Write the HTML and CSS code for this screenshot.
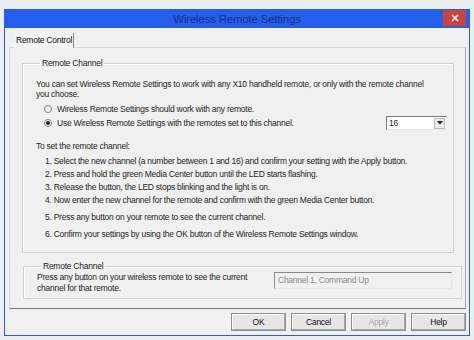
FILE: index.html
```html
<!DOCTYPE html>
<html>
<head>
<meta charset="utf-8">
<link rel="stylesheet" href="styles.css">
</head>
<body>
<div class="window">
  <div class="titlebar">
    <span class="title">Wireless Remote Settings</span>
    <span class="close"><svg width="8" height="8" viewBox="0 0 8 8"><path d="M1 1L7 7M7 1L1 7" stroke="#fff" stroke-width="1.6"/></svg></span>
  </div>
  <div class="client">
    <div class="tabs"><div class="tab">Remote Control</div></div>
    <div class="page">
      <fieldset class="group g1">
        <legend>Remote Channel</legend>
        <p class="intro">You can set Wireless Remote Settings to work with any X10 handheld remote, or only with the remote channel you choose.</p>
        <div class="radio"><span class="rb"></span><span>Wireless Remote Settings should work with any remote.</span></div>
        <div class="radio row2"><span class="rb on"></span><span class="grow">Use Wireless Remote Settings with the remotes set to this channel.</span>
          <span class="combo"><span class="val">16</span><span class="arrow"><svg width="6" height="4" viewBox="0 0 6 4"><path d="M0 0H6L3 3.5Z" fill="#222"/></svg></span></span>
        </div>
        <p class="steps-head">To set the remote channel:</p>
        <ol class="steps">
          <li class="first">1. Select the new channel (a number between 1 and 16) and confirm your setting with the Apply button.</li>
          <li>2. Press and hold the green Media Center button until the LED starts flashing.</li>
          <li>3. Release the button, the LED stops blinking and the light is on.</li>
          <li>4. Now enter the new channel for the remote and confirm with the green Media Center button.</li>
          <li class="gap">5. Press any button on your remote to see the current channel.</li>
          <li class="gap">6. Confirm your settings by using the OK button of the Wireless Remote Settings window.</li>
        </ol>
      </fieldset>
      <fieldset class="group g2">
        <legend>Remote Channel</legend>
        <div class="g2row">
          <p class="g2text">Press any button on your wireless remote to see the current<br>channel for that remote.</p>
          <div class="field">Channel 1, Command Up</div>
        </div>
      </fieldset>
    </div>
    <div class="buttons">
      <button class="btn">OK</button>
      <button class="btn">Cancel</button>
      <button class="btn disabled">Apply</button>
      <button class="btn">Help</button>
    </div>
  </div>
</div>
</body>
</html>
```
FILE: styles.css
```css
* { box-sizing: border-box; }
html, body { margin: 0; padding: 0; }
body {
  background: #eceef0;
  width: 474px;
  height: 340px;
  overflow: hidden;
  font-family: "Liberation Sans", Arial, sans-serif;
  font-size: 8.5px;
  letter-spacing: -0.25px;
  color: #262626;
}
.window {
  margin: 9px 4px 0 4px;
  width: 466px;
  height: 327px;
  border: 1px solid #2a5ee8;
  border-top: 0;
  background: #f0f0f0;
  display: flex;
  flex-direction: column;
}
.titlebar {
  height: 19px;
  background: #245fec;
  display: flex;
  align-items: center;
  justify-content: center;
  position: relative;
  margin: 0 -1px;
}
.title {
  font-size: 11.5px;
  color: #1a2f86;
  letter-spacing: -0.2px;
}
.close {
  position: absolute;
  right: 4px;
  top: 1px;
  width: 23px;
  height: 16px;
  background: #c9453d;
  display: flex;
  align-items: center;
  justify-content: center;
}
.client {
  flex: 1;
  display: flex;
  flex-direction: column;
  padding: 5px 3px 0 4px;
}
.tabs {
  display: flex;
  padding-left: 5px;
  height: 14px;
}
.tab {
  height: 15px;
  padding: 2px 1px 0 2px;
  border-right: 1px solid #8a8a8a;
  background: #f4f4f4;
  color: #111;
  position: relative;
  z-index: 1;
}
.page {
  height: 262px;
  border: 1px solid #d8d8d8;
  border-right: 1px solid #a8a8a8;
  border-bottom: 1px solid #7a7a7a;
  padding: 10px 11px 0 12px;
  display: flex;
  flex-direction: column;
}
.group {
  margin: 0;
  border: 1px solid #d0d0d0;
  box-shadow: inset 1px 1px 0 #fff;
  padding: 0 0 0 13px;
  min-width: 0;
}
legend {
  padding: 0 2px;
  margin-left: 4px;
  color: #222;
  line-height: 10px;
}
.g1 {
  height: 195px;
  flex: none;
}
.intro {
  margin: 11px 0 0 0;
  width: 392px;
  line-height: 10px;
}
.radio {
  display: flex;
  align-items: center;
  margin-top: 4px;
  padding-left: 8px;
  height: 12px;
}
.row2 { margin-top: 2px; }
.rb {
  width: 8px;
  height: 8px;
  border-radius: 50%;
  border: 1px solid #7a7a7a;
  background: #fff;
  margin-right: 5px;
  flex: none;
  display: flex;
  align-items: center;
  justify-content: center;
}
.rb.on::after {
  content: "";
  width: 4px;
  height: 4px;
  border-radius: 50%;
  background: #222;
}
.grow { flex: 1; }
.combo {
  width: 61px;
  height: 14px;
  flex: none;
  border-top: 1px solid #7a7a7a;
  border-left: 1px solid #7a7a7a;
  border-right: 1px solid #e8e8e8;
  border-bottom: 1px solid #e8e8e8;
  background: #fff;
  display: flex;
  align-items: center;
  margin-right: 6px;
}
.val { flex: 1; padding-left: 2px; }
.arrow {
  width: 11px;
  height: 11px;
  margin-right: 1px;
  background: #ececec;
  border: 1px solid #bcbcbc;
  display: flex;
  align-items: center;
  justify-content: center;
}
.steps-head {
  margin: 12px 0 0 0;
  line-height: 11px;
}
.steps {
  list-style: none;
  margin: 0;
  padding: 0 0 0 9px;
}
.steps li {
  line-height: 11px;
  margin-top: 2px;
}
.steps li.first { margin-top: 4px; }
.steps li.gap { margin-top: 6px; }
.g2 {
  margin-top: 8px;
  height: 38px;
  margin-left: 1px;
  margin-right: -8px;
}
.g2row {
  display: flex;
  align-items: flex-start;
}
.g2text {
  margin: 1px 0 0 0;
  width: 237px;
  line-height: 11px;
  flex: none;
  white-space: nowrap;
}
.field {
  margin-top: 1px;
  width: 178px;
  height: 17px;
  border-top: 1px solid #8a8a8a;
  border-left: 1px solid #8a8a8a;
  border-right: 1px solid #e6e6e6;
  border-bottom: 1px solid #e6e6e6;
  background: #f0f0f0;
  color: #8a8a8a;
  padding: 2px 0 0 3px;
}
.buttons {
  display: flex;
  justify-content: flex-end;
  gap: 5px;
  padding: 4px 0 0 0;
}
.btn {
  width: 55px;
  height: 18px;
  border: 1px solid #8f8f8f;
  background: #e6e6e6;
  box-shadow: inset -1px -1px 0 #a8a8a8, inset 1px 1px 0 #fff;
  font-family: "Liberation Sans", Arial, sans-serif;
  font-size: 8.5px;
  letter-spacing: -0.25px;
  color: #111;
  padding: 0;
}
.btn.disabled { color: #a8a8a8; }
```
